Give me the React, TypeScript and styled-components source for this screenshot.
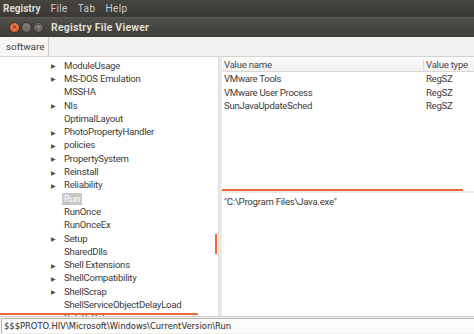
import React from "react";
import styled, { createGlobalStyle } from "styled-components";

const GlobalStyle = createGlobalStyle`
  html, body { margin: 0; padding: 0; background: #f2f1f0; }
  body { font-family: Roboto, "Noto Sans", sans-serif; }
`;

const Window = styled.div`
  width: 474px;
  height: 334px;
  display: flex;
  flex-direction: column;
  overflow: hidden;
  background: #f2f1f0;
`;

const MenuBar = styled.div`
  height: 17px;
  background: linear-gradient(#45443f, #3a3935);
  display: flex;
  align-items: center;
  padding-left: 3px;
  gap: 10px;
  font-family: Roboto, sans-serif;
  font-size: 10px;
  color: #dfdbd2;
`;

const MenuItem = styled.span<{ $bold?: boolean }>`
  font-weight: ${(p) => (p.$bold ? 700 : 400)};
  color: ${(p) => (p.$bold ? "#dfdbd2" : "#cfcbc2")};
  letter-spacing: ${(p) => (p.$bold ? "0px" : "0.4px")};
`;

const TitleBar = styled.div`
  height: 19px;
  background: linear-gradient(#504f4a, #3d3c38);
  border-top: 1px solid #5a5954;
  display: flex;
  align-items: center;
  padding-left: 9px;
`;

const WinButtons = styled.div`
  display: flex;
  gap: 1px;
  margin-right: 7px;
`;

const WinBtn = styled.span<{ $close?: boolean }>`
  width: 9px;
  height: 9px;
  border-radius: 50%;
  background: ${(p) =>
    p.$close
      ? "radial-gradient(circle at 50% 40%, #f58a5c, #e0501d)"
      : "radial-gradient(circle at 50% 40%, #86857f, #5d5c57)"};
  border: 1px solid #33322e;
  display: flex;
  align-items: center;
  justify-content: center;
  font-size: 7px;
  line-height: 1;
  color: #3a2a22;
  font-family: "DejaVu Sans", sans-serif;
`;

const Title = styled.span`
  font-family: Roboto, sans-serif;
  font-weight: 700;
  font-size: 10.5px;
  color: #dfdbd2;
  letter-spacing: 0.2px;
`;

const TabBar = styled.div`
  height: 19px;
  background: #f2f1f0;
  border-bottom: 1px solid #d5d3cf;
  display: flex;
  align-items: flex-end;
`;

const Tab = styled.div`
  height: 19px;
  padding: 0 4px 0 6px;
  background: #f7f6f5;
  border-right: 1px solid #cfcdc9;
  display: flex;
  align-items: center;
  font-size: 9.8px;
  color: #3c3c3c;
`;

const Main = styled.div`
  flex: 1;
  display: flex;
  min-height: 0;
`;

const LeftPane = styled.div`
  position: relative;
  width: 218px;
  background: #ffffff;
  overflow: hidden;
  padding-top: 2px;
`;

const TreeRow = styled.div`
  height: 13.3px;
  display: flex;
  align-items: center;
  padding-left: 51px;
  font-size: 9.6px;
  letter-spacing: -0.25px;
  color: #3c3c3c;
  white-space: nowrap;
`;

const Arrow = styled.span`
  width: 13px;
  font-size: 6px;
  color: #4a4a4a;
  flex-shrink: 0;
`;

const Label = styled.span<{ $selected?: boolean }>`
  padding: 0 2px;
  margin-left: -2px;
  background: ${(p) => (p.$selected ? "#c9c8c6" : "transparent")};
  color: ${(p) => (p.$selected ? "#ffffff" : "#3c3c3c")};
  line-height: 12px;
`;

const VScrollThumb = styled.div`
  position: absolute;
  right: 1px;
  top: 177px;
  width: 2px;
  height: 20px;
  background: #ec6a3a;
`;

const HScrollThumb = styled.div`
  position: absolute;
  left: 0;
  bottom: 1px;
  width: 198px;
  height: 2px;
  background: #ec6a3a;
`;

const Divider = styled.div`
  width: 3px;
  background: #ebeae8;
  border-left: 1px solid #dddcda;
`;

const RightPane = styled.div`
  flex: 1;
  display: flex;
  flex-direction: column;
  background: #ffffff;
  min-width: 0;
`;

const TableArea = styled.div`
  position: relative;
  height: 134px;
  display: flex;
  flex-direction: column;
`;

const HeaderRow = styled.div`
  height: 14px;
  display: flex;
  align-items: center;
  background: linear-gradient(#fbfbfa, #f1f0ef);
  border-bottom: 1px solid #dad9d7;
  font-size: 9.6px;
  letter-spacing: -0.25px;
  color: #4a4a4a;
`;

const Cell = styled.div<{ $w?: string; $sep?: boolean }>`
  ${(p) => (p.$w ? `width: ${p.$w};` : "flex: 1;")}
  padding-left: 2px;
  white-space: nowrap;
  overflow: hidden;
  ${(p) => (p.$sep ? "border-left: 1px solid #e0dfdd;" : "")}
`;

const DataRow = styled.div`
  height: 13.5px;
  display: flex;
  align-items: center;
  font-size: 9.6px;
  letter-spacing: -0.3px;
  color: #3c3c3c;
`;

const TableHScroll = styled.div`
  position: absolute;
  left: 0;
  bottom: 0;
  width: 241px;
  height: 2px;
  background: #ec6a3a;
`;

const ValueArea = styled.div`
  flex: 1;
  border-top: 2px solid #ecebe9;
  padding: 3px 2px;
  font-size: 9.6px;
  letter-spacing: -0.25px;
  color: #3c3c3c;
  white-space: nowrap;
`;

const StatusBar = styled.div`
  height: 17px;
  border-top: 1px solid #cfcecc;
  background: #f2f1f0;
  display: flex;
  align-items: center;
  padding-left: 1px;
`;

const PathBox = styled.div`
  height: 14px;
  width: 470px;
  border: 1px solid #b8b7b4;
  border-right: none;
  border-bottom: none;
  background: #fbfbfa;
  display: flex;
  align-items: center;
  padding-left: 2px;
  font-family: "DejaVu Sans", sans-serif;
  font-size: 8.4px;
  color: #2a2a2a;
  white-space: nowrap;
`;

type Node = { name: string; kids?: boolean; selected?: boolean };

const tree: Node[] = [
  { name: "ModuleUsage", kids: true },
  { name: "MS-DOS Emulation", kids: true },
  { name: "MSSHA" },
  { name: "Nls", kids: true },
  { name: "OptimalLayout" },
  { name: "PhotoPropertyHandler", kids: true },
  { name: "policies", kids: true },
  { name: "PropertySystem", kids: true },
  { name: "Reinstall", kids: true },
  { name: "Reliability", kids: true },
  { name: "Run", selected: true },
  { name: "RunOnce" },
  { name: "RunOnceEx" },
  { name: "Setup", kids: true },
  { name: "SharedDlls" },
  { name: "Shell Extensions", kids: true },
  { name: "ShellCompatibility", kids: true },
  { name: "ShellScrap", kids: true },
  { name: "ShellServiceObjectDelayLoad" },
  { name: "SideBySide", kids: true },
];

const values = [
  ["VMware Tools", "RegSZ"],
  ["VMware User Process", "RegSZ"],
  ["SunJavaUpdateSched", "RegSZ"],
];

export default function App() {
  return (
    <>
      <GlobalStyle />
      <Window>
        <MenuBar>
          <MenuItem $bold>Registry</MenuItem>
          <MenuItem>File</MenuItem>
          <MenuItem>Tab</MenuItem>
          <MenuItem>Help</MenuItem>
        </MenuBar>
        <TitleBar>
          <WinButtons>
            <WinBtn $close>×</WinBtn>
            <WinBtn>–</WinBtn>
            <WinBtn>□</WinBtn>
          </WinButtons>
          <Title>Registry File Viewer</Title>
        </TitleBar>
        <TabBar>
          <Tab>software</Tab>
        </TabBar>
        <Main>
          <LeftPane>
            {tree.map((n) => (
              <TreeRow key={n.name}>
                <Arrow>{n.kids ? "▶" : ""}</Arrow>
                <Label $selected={n.selected}>{n.name}</Label>
              </TreeRow>
            ))}
            <VScrollThumb />
            <HScrollThumb />
          </LeftPane>
          <Divider />
          <RightPane>
            <TableArea>
              <HeaderRow>
                <Cell>Value name</Cell>
                <Cell $w="48px" $sep>
                  Value type
                </Cell>
              </HeaderRow>
              {values.map(([n, t]) => (
                <DataRow key={n}>
                  <Cell>{n}</Cell>
                  <Cell $w="48px">{t}</Cell>
                </DataRow>
              ))}
              <TableHScroll />
            </TableArea>
            <ValueArea>"C:\Program Files\Java.exe"</ValueArea>
          </RightPane>
        </Main>
        <StatusBar>
          <PathBox>$$$PROTO.HIV\Microsoft\Windows\CurrentVersion\Run</PathBox>
        </StatusBar>
      </Window>
    </>
  );
}
